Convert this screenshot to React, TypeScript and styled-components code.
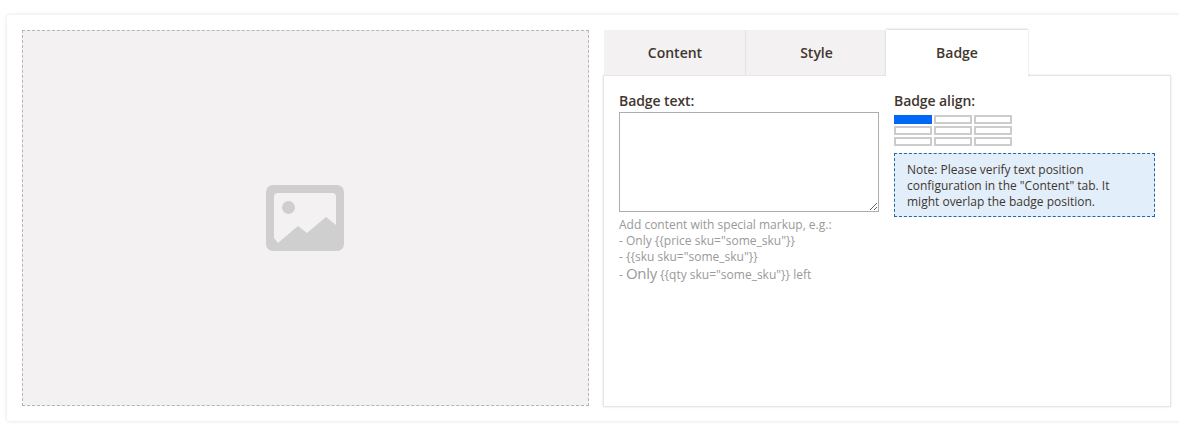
import styled, { createGlobalStyle } from "styled-components";

const GlobalStyle = createGlobalStyle`
  html, body {
    margin: 0;
    padding: 0;
    height: 424px;
    overflow: hidden;
    background: #ffffff;
    font-family: "Open Sans", "Noto Sans", sans-serif;
    color: #41362f;
  }
`;

const ALIGN_CELLS = Array.from({ length: 9 }, (_, i) => i);

const ImageIcon = () => (
  <svg width="78" height="66" viewBox="0 0 78 66" aria-hidden="true">
    <path
      fill="#cfcfcf"
      fillRule="evenodd"
      d="M7 0H71A7 7 0 0 1 78 7V59A7 7 0 0 1 71 66H7A7 7 0 0 1 0 59V7A7 7 0 0 1 7 0ZM12 8A4 4 0 0 0 8 12V53L12 58L32 41L41 48L60 32L70 40V12A4 4 0 0 0 66 8Z"
    />
    <circle cx="22.5" cy="22.5" r="6.5" fill="#cfcfcf" />
  </svg>
);

const App = () => {
  return (
    <>
      <GlobalStyle />
      <Page>
        <Card>
          <Placeholder>
            <ImageIcon />
          </Placeholder>
          <Editor>
            <Tabs>
              <Tab $width={142}>Content</Tab>
              <Tab $width={140} $plain>
                Style
              </Tab>
              <Tab $width={142} $active>
                Badge
              </Tab>
            </Tabs>
            <Panel>
              <TextColumn>
                <FieldLabel>Badge text:</FieldLabel>
                <BadgeInput aria-label="Badge text" />
                <Help>
                  <div>Add content with special markup, e.g.:</div>
                  <div>- Only {'{{price sku="some_sku"}}'}</div>
                  <div>- {'{{sku sku="some_sku"}}'}</div>
                  <div>
                    - <BigWord>Only</BigWord> {'{{qty sku="some_sku"}}'} left
                  </div>
                </Help>
              </TextColumn>
              <AlignColumn>
                <FieldLabel>Badge align:</FieldLabel>
                <AlignGrid>
                  {ALIGN_CELLS.map((cell) => (
                    <AlignCell key={cell} $selected={cell === 0} />
                  ))}
                </AlignGrid>
                <Note>
                  Note: Please verify text position configuration in the
                  "Content" tab. It might overlap the badge position.
                </Note>
              </AlignColumn>
            </Panel>
          </Editor>
        </Card>
      </Page>
    </>
  );
};

const Page = styled.div`
  width: 1179px;
  height: 424px;
  padding: 15px 0 0 7px;
  box-sizing: border-box;
  overflow: hidden;
`;

const Card = styled.div`
  width: 1200px;
  height: 406px;
  box-sizing: border-box;
  padding: 15px;
  display: flex;
  align-items: flex-start;
  gap: 14px;
  background: #ffffff;
  border-radius: 3px;
  box-shadow: 0 0 4px rgba(0, 0, 0, 0.13);
`;

const Placeholder = styled.div`
  width: 567px;
  height: 376px;
  flex: none;
  box-sizing: border-box;
  display: flex;
  align-items: center;
  justify-content: center;
  padding-right: 1px;
  background: #f3f1f1;
  border: 1px dashed #b8b5b0;
`;

const Editor = styled.div`
  width: 568px;
  flex: none;
  display: flex;
  flex-direction: column;
`;

const Tabs = styled.div`
  display: flex;
  height: 45px;
  padding-left: 1px;
  position: relative;
  z-index: 1;
`;

const Tab = styled.div<{ $width: number; $active?: boolean; $plain?: boolean }>`
  width: ${({ $width }) => $width}px;
  height: ${({ $active }) => ($active ? "47px" : "45px")};
  box-sizing: border-box;
  display: flex;
  align-items: center;
  justify-content: center;
  padding-left: ${({ $active }) => ($active ? "0" : "1px")};
  padding-bottom: ${({ $active }) => ($active ? "2px" : "0")};
  font-size: 14px;
  font-weight: 600;
  color: #41362f;
  background: ${({ $active }) => ($active ? "#ffffff" : "#f3f1f1")};
  border-right: ${({ $active, $plain }) =>
    $active || $plain ? "none" : "1px solid #e4e2e2"};
  box-shadow: ${({ $active }) =>
    $active ? "0 -1px 2px rgba(0, 0, 0, 0.16)" : "none"};
  clip-path: ${({ $active }) =>
    $active ? "inset(-4px -4px 0 -4px)" : "none"};
`;

const Panel = styled.div`
  height: 332px;
  box-sizing: border-box;
  padding: 16px 15px 0;
  display: flex;
  gap: 15px;
  background: #ffffff;
  border: 1px solid #e6e6e6;
  box-shadow: 0 0 2px rgba(0, 0, 0, 0.12);
`;

const TextColumn = styled.div`
  width: 260px;
  flex: none;
`;

const AlignColumn = styled.div`
  width: 261px;
  flex: none;
`;

const FieldLabel = styled.div`
  font-size: 14px;
  font-weight: 600;
  letter-spacing: -0.08px;
  line-height: 18px;
  height: 20px;
  color: #41362f;
`;

const BadgeInput = styled.textarea`
  display: block;
  width: 260px;
  height: 100px;
  box-sizing: border-box;
  margin: 0;
  padding: 4px;
  background: #ffffff;
  border: 1px solid #adadad;
  border-radius: 0;
  outline: none;
`;

const Help = styled.div`
  margin-top: 5px;
  font-size: 12px;
  line-height: 16px;
  color: #999999;
`;

const BigWord = styled.span`
  font-size: 15px;
  letter-spacing: -0.3px;
`;

const AlignGrid = styled.div`
  margin-top: 3px;
  display: grid;
  grid-template-columns: repeat(3, 38px);
  grid-auto-rows: 9px;
  gap: 2px;
`;

const AlignCell = styled.div<{ $selected?: boolean }>`
  box-sizing: border-box;
  background: ${({ $selected }) => ($selected ? "#0068f5" : "#ffffff")};
  border: 2px solid ${({ $selected }) => ($selected ? "#0068f5" : "#cccccc")};
`;

const Note = styled.div`
  margin-top: 7px;
  width: 261px;
  height: 64px;
  box-sizing: border-box;
  padding: 8px 12px 0 12px;
  font-size: 12px;
  line-height: 16px;
  color: #41362f;
  background: #e2eefa;
  border: 1px dashed #1c6ba8;
`;

export default App;
